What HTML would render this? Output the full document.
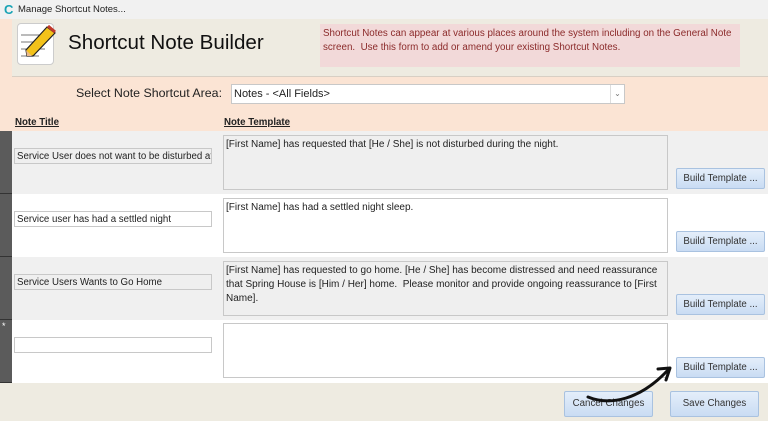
<!DOCTYPE html>
<html><head><style>
*{margin:0;padding:0;box-sizing:border-box}
body{width:768px;height:421px;overflow:hidden;background:#fbe4d4;font-family:"Liberation Sans",sans-serif;position:relative;font-size:10px;color:#222}
.a{position:absolute}
.inp{position:absolute;border:1px solid #c8c8c8;background:#fff;font-size:9.7px;padding:2px 2px;white-space:nowrap;overflow:hidden;line-height:12px}
.g{background:#efefef}
.btn{position:absolute;left:676px;width:89px;height:21px;border:1px solid #a9c2e0;border-radius:2px;background:linear-gradient(#e4eefa,#c9dcf3);font-size:9.7px;color:#333;text-align:center;line-height:19px}
.row{position:absolute;left:12px;width:756px;height:63px}
.sel{position:absolute;left:0;width:12px;height:63px;background:#5b5b5b;border-bottom:1px solid #333}
.t{white-space:normal;line-height:14px;font-size:10px}
</style></head><body>
<div class="a" style="left:0;top:0;width:768px;height:19px;background:#f1f1f1"></div>
<div class="a" style="left:4px;top:2px;font-size:13px;font-weight:bold;color:#19a3b5">C</div>
<div class="a" style="left:18px;top:4px;font-size:9.5px;color:#222">Manage Shortcut Notes...</div>
<div class="a" style="left:12px;top:19px;width:756px;height:58px;background:#eeebe1;border-bottom:1px solid #d8cfc4"></div>
<div class="a" style="left:17px;top:23px;width:37px;height:42px;background:#fff;border:1px solid #ccc;border-radius:4px"></div>
<svg class="a" style="left:17px;top:23px" width="42" height="42" viewBox="0 0 42 42">
<g stroke="#777" stroke-width="1"><line x1="4" y1="12" x2="24" y2="12"/><line x1="4" y1="19" x2="30" y2="19"/><line x1="4" y1="26" x2="28" y2="26"/><line x1="4" y1="33" x2="22" y2="33"/></g>
<path d="M30 4 L38 10 L16 33 L10 33 L9 27 Z" fill="#f3c21a" stroke="#222" stroke-width="1.2"/>
<path d="M31 3 L38 9" stroke="#c0392b" stroke-width="3"/>
<path d="M9 27 L10 33 L15 33 Z" fill="#e9b98a"/>
</svg>
<div class="a" style="left:68px;top:31px;font-size:20.6px;color:#111">Shortcut Note Builder</div>
<div class="a" style="left:320px;top:24px;width:420px;height:43px;background:#f2d9d9;color:#8b2a2a;font-size:9.8px;padding:3px 3px;line-height:14px">Shortcut Notes can appear at various places around the system including on the General Note screen.&nbsp; Use this form to add or amend your existing Shortcut Notes.</div>
<div class="a" style="left:76px;top:86px;font-size:12.4px;color:#222">Select Note Shortcut Area:</div>
<div class="inp" style="left:231px;top:84px;width:394px;height:20px;font-size:11px;line-height:15px">Notes - &lt;All Fields&gt;</div>
<div class="a" style="left:610px;top:85px;width:14px;height:18px;border-left:1px solid #ddd;font-size:8px;color:#777;text-align:center;line-height:18px">&#8964;</div>
<div class="a" style="left:15px;top:117px;font-size:9.7px;font-weight:bold;text-decoration:underline">Note Title</div>
<div class="a" style="left:224px;top:117px;font-size:9.7px;font-weight:bold;text-decoration:underline">Note Template</div>

<div class="row" style="top:131px;background:#f0f0f0"></div>
<div class="row" style="top:194px;background:#fff"></div>
<div class="row" style="top:257px;background:#f0f0f0"></div>
<div class="row" style="top:320px;background:#fff"></div>
<div class="sel" style="top:131px"></div>
<div class="sel" style="top:194px"></div>
<div class="sel" style="top:257px"></div>
<div class="sel" style="top:320px"></div>
<div class="a" style="left:2px;top:321px;color:#fff;font-size:9px">*</div>

<div class="inp g" style="left:14px;top:148px;width:198px;height:16px">Service User does not want to be disturbed at night</div>
<div class="inp" style="left:14px;top:211px;width:198px;height:16px">Service user has had a settled night</div>
<div class="inp g" style="left:14px;top:274px;width:198px;height:16px">Service Users Wants to Go Home</div>
<div class="inp" style="left:14px;top:337px;width:198px;height:16px"></div>

<div class="inp g t" style="left:223px;top:135px;width:445px;height:55px">[First Name] has requested that [He / She] is not disturbed during the night.</div>
<div class="inp t" style="left:223px;top:198px;width:445px;height:55px">[First Name] has had a settled night sleep.</div>
<div class="inp g t" style="left:223px;top:261px;width:445px;height:55px">[First Name] has requested to go home. [He / She] has become distressed and need reassurance<br>that Spring House is [Him / Her] home.&nbsp; Please monitor and provide ongoing reassurance to [First Name].</div>
<div class="inp" style="left:223px;top:323px;width:445px;height:55px"></div>

<div class="btn" style="top:168px">Build Template ...</div>
<div class="btn" style="top:231px">Build Template ...</div>
<div class="btn" style="top:294px">Build Template ...</div>
<div class="btn" style="top:357px">Build Template ...</div>

<div class="a" style="left:0;top:383px;width:768px;height:38px;background:#eeebe1"></div>
<div class="btn" style="left:564px;top:391px;width:89px;height:26px;line-height:24px">Cancel Changes</div>
<div class="btn" style="left:670px;top:391px;width:89px;height:26px;line-height:24px">Save Changes</div>
<svg class="a" style="left:580px;top:360px" width="100" height="50" viewBox="0 0 100 50">
<path d="M8 37 C30 46 60 40 88 10" stroke="#111" stroke-width="3" fill="none" stroke-linecap="round"/>
<path d="M78 9 L90 8 L86 20" stroke="#111" stroke-width="3" fill="none" stroke-linecap="round" stroke-linejoin="round"/>
</svg>
</body></html>
